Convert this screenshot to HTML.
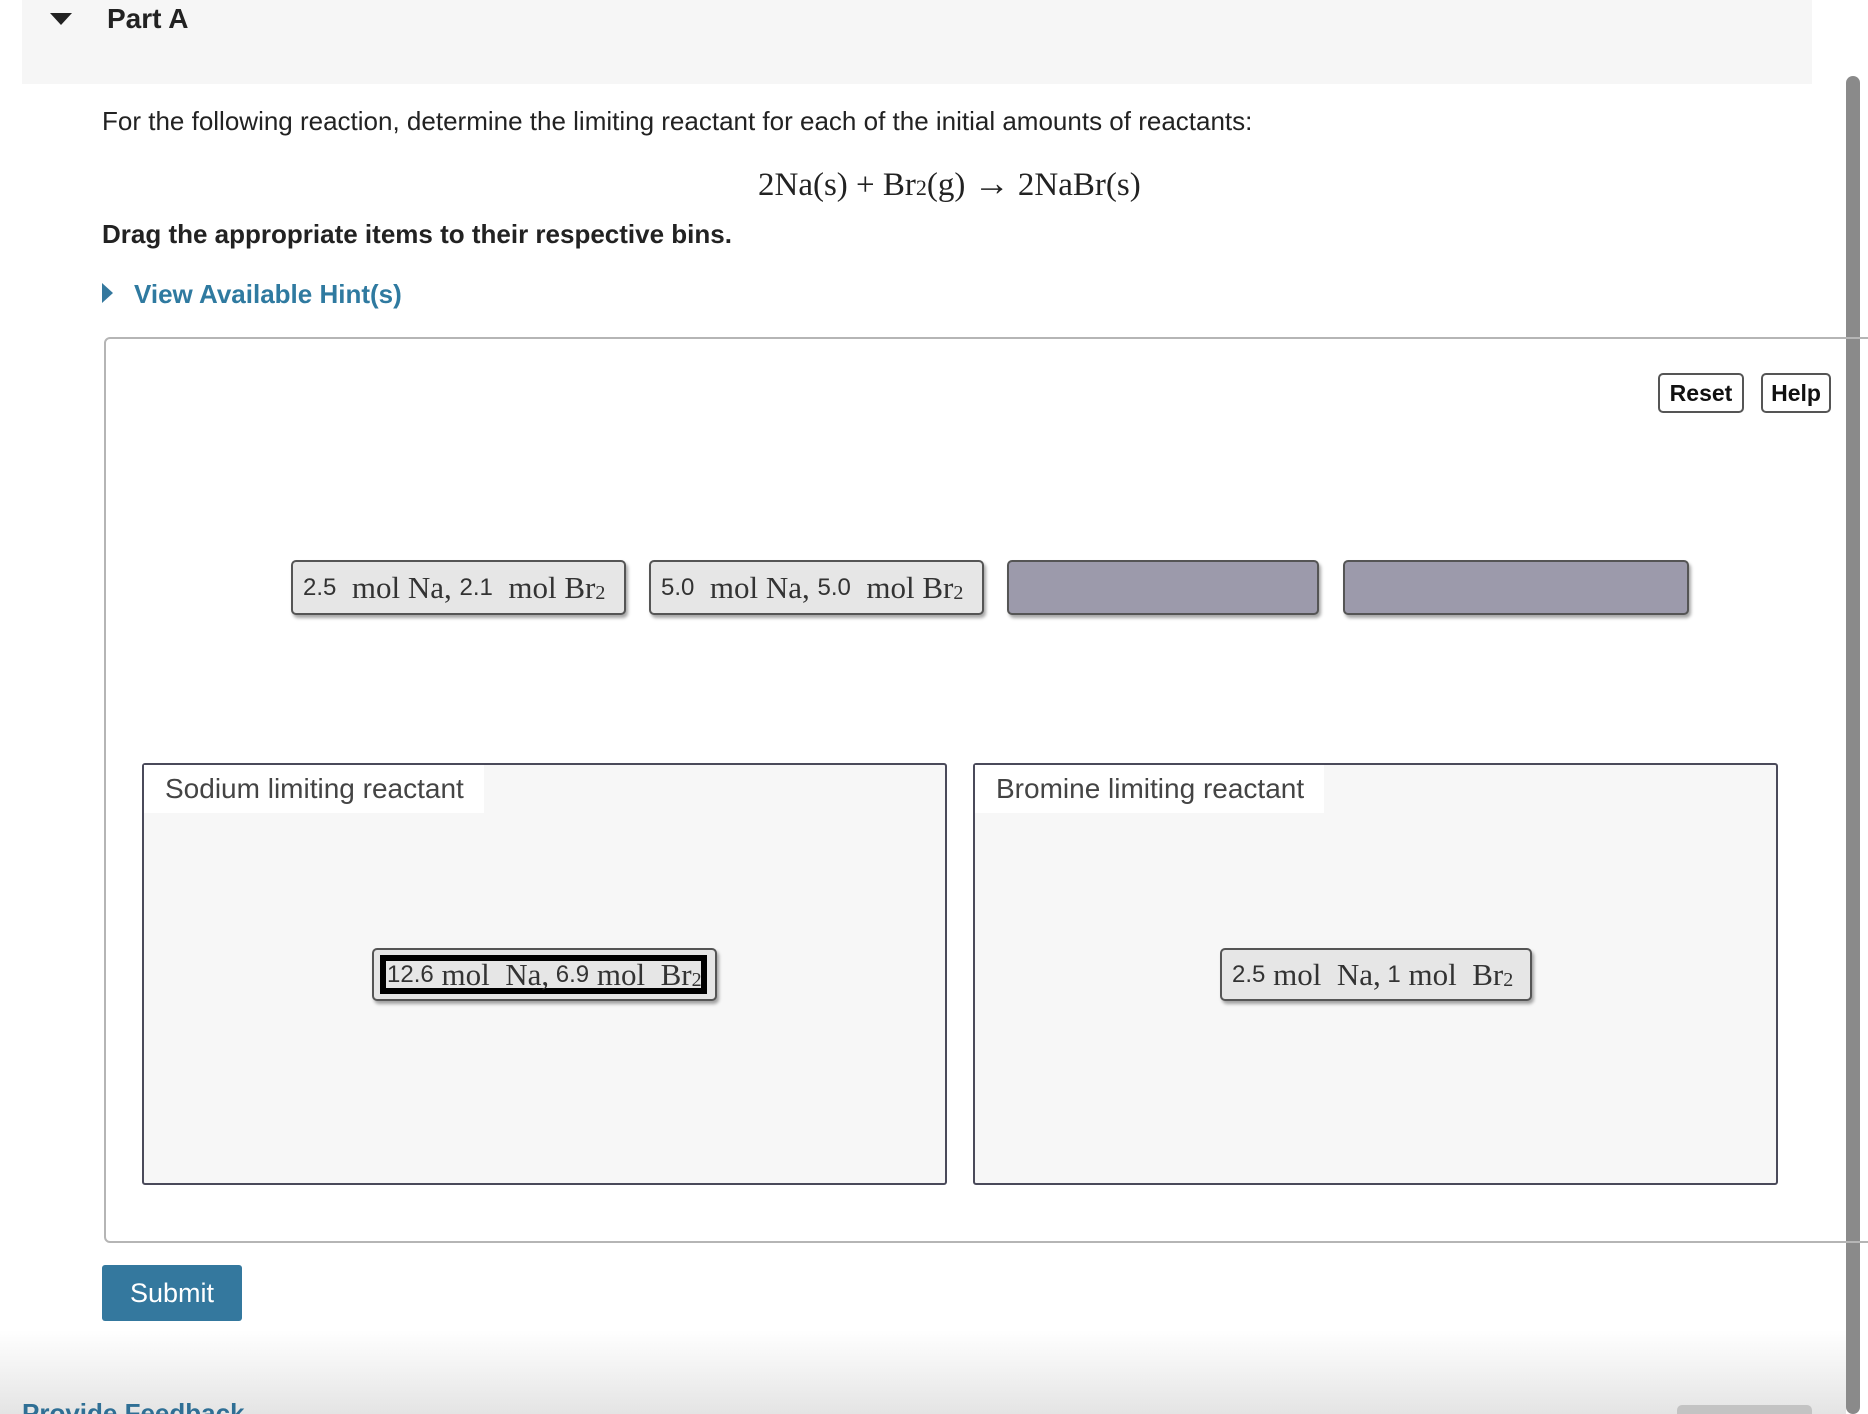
<!DOCTYPE html>
<html style="height:1414px;overflow:hidden"><head><meta charset="utf-8"><style>
*{margin:0;padding:0;box-sizing:border-box}
body{width:1868px;height:1414px;background:#fff;position:relative;overflow:hidden;font-family:"Liberation Sans",sans-serif;color:#222}
.a{position:absolute}
.ser{font-family:"Liberation Serif",serif}
.tile{position:absolute;background:#e6e6e6;border:2px solid #555;border-radius:5px;box-shadow:2px 3px 3px rgba(0,0,0,.35);display:flex;align-items:center;padding-left:10px;font-size:31px;color:#333;white-space:nowrap}
.tile .s{font-family:"Liberation Sans",sans-serif;font-size:24px}
.bin{position:absolute;background:#f7f7f7;border:2px solid #4a4a5a;border-radius:3px}
.lab{position:absolute;left:0;top:0;background:#fff;font-size:28px;color:#444;padding:8px 20px 8px 21px}
.btn{position:absolute;border:2px solid #555;border-radius:5px;font-weight:bold;font-size:23px;display:flex;align-items:center;justify-content:center;background:#fff;color:#111}
</style></head><body>
<div class="a" style="left:22px;top:0;width:1790px;height:84px;background:#f6f6f6"></div>
<div class="a" style="left:50px;top:13px;width:0;height:0;border-left:11px solid transparent;border-right:11px solid transparent;border-top:12px solid #222"></div>
<div class="a" style="left:107px;top:3px;font-size:28px;font-weight:bold">Part A</div>
<div class="a" style="left:1846px;top:76px;width:14px;height:1338px;background:#8a8a8a;border-radius:7px"></div>
<div class="a" style="left:102px;top:106px;font-size:26px">For the following reaction, determine the limiting reactant for each of the initial amounts of reactants:</div>
<div class="a ser" style="left:758px;top:162px;font-size:33px;white-space:nowrap">2Na(s) + Br<span style="font-size:22px">2</span>(g) <span style="font-size:36px">→</span> 2NaBr(s)</div>
<div class="a" style="left:102px;top:219px;font-size:26px;font-weight:bold">Drag the appropriate items to their respective bins.</div>
<div class="a" style="left:102px;top:283px;width:0;height:0;border-top:10px solid transparent;border-bottom:10px solid transparent;border-left:11px solid #34789e"></div>
<div class="a" style="left:134px;top:279px;font-size:26px;font-weight:bold;color:#2f7aa0">View Available Hint(s)</div>
<div class="a" style="left:104px;top:337px;width:1800px;height:906px;border:2px solid #b5b5b5;border-radius:6px"></div>
<div class="btn" style="left:1658px;top:373px;width:86px;height:40px">Reset</div>
<div class="btn" style="left:1761px;top:373px;width:70px;height:40px">Help</div>
<div class="tile ser" style="left:291px;top:560px;width:335px;height:55px"><span class="s">2.5</span>&nbsp; mol Na,&nbsp;<span class="s">2.1</span>&nbsp; mol Br<span style="font-size:20px;position:relative;top:6px">2</span></div>
<div class="tile ser" style="left:649px;top:560px;width:335px;height:55px"><span class="s">5.0</span>&nbsp; mol Na,&nbsp;<span class="s">5.0</span>&nbsp; mol Br<span style="font-size:20px;position:relative;top:6px">2</span></div>
<div class="tile" style="left:1007px;top:560px;width:312px;height:55px;background:#9c9aab"></div>
<div class="tile" style="left:1343px;top:560px;width:346px;height:55px;background:#9c9aab"></div>
<div class="bin" style="left:142px;top:763px;width:805px;height:422px"><div class="lab">Sodium limiting reactant</div></div>
<div class="bin" style="left:973px;top:763px;width:805px;height:422px"><div class="lab">Bromine limiting reactant</div></div>
<div class="tile ser" style="left:372px;top:948px;width:345px;height:53px;padding:5px 8px 5px 6px"><div style="border:6px solid #000;width:100%;height:100%;display:flex;align-items:center;padding-left:1px;background:#e6e6e6"><span class="s">12.6</span>&nbsp;mol&nbsp; Na, <span class="s">&nbsp;6.9</span>&nbsp;mol&nbsp; Br<span style="font-size:20px;position:relative;top:6px">2</span></div></div>
<div class="tile ser" style="left:1220px;top:948px;width:312px;height:53px"><span class="s">2.5</span>&nbsp;mol&nbsp; Na, <span class="s">&nbsp;1</span>&nbsp;mol&nbsp; Br<span style="font-size:20px;position:relative;top:6px">2</span></div>
<div class="a" style="left:102px;top:1265px;width:140px;height:56px;background:#34789e;border-radius:3px;color:#fff;font-size:27px;display:flex;align-items:center;justify-content:center">Submit</div>
<div class="a" style="left:0;top:1330px;width:1846px;height:84px;background:linear-gradient(#fff,#e4e4e4)"></div>
<div class="a" style="left:22px;top:1398px;font-size:26px;color:#2f6f95;font-weight:bold">Provide Feedback</div>
<div class="a" style="left:1677px;top:1405px;width:135px;height:20px;background:#c3c3c3;border-radius:5px"></div>
</body></html>
